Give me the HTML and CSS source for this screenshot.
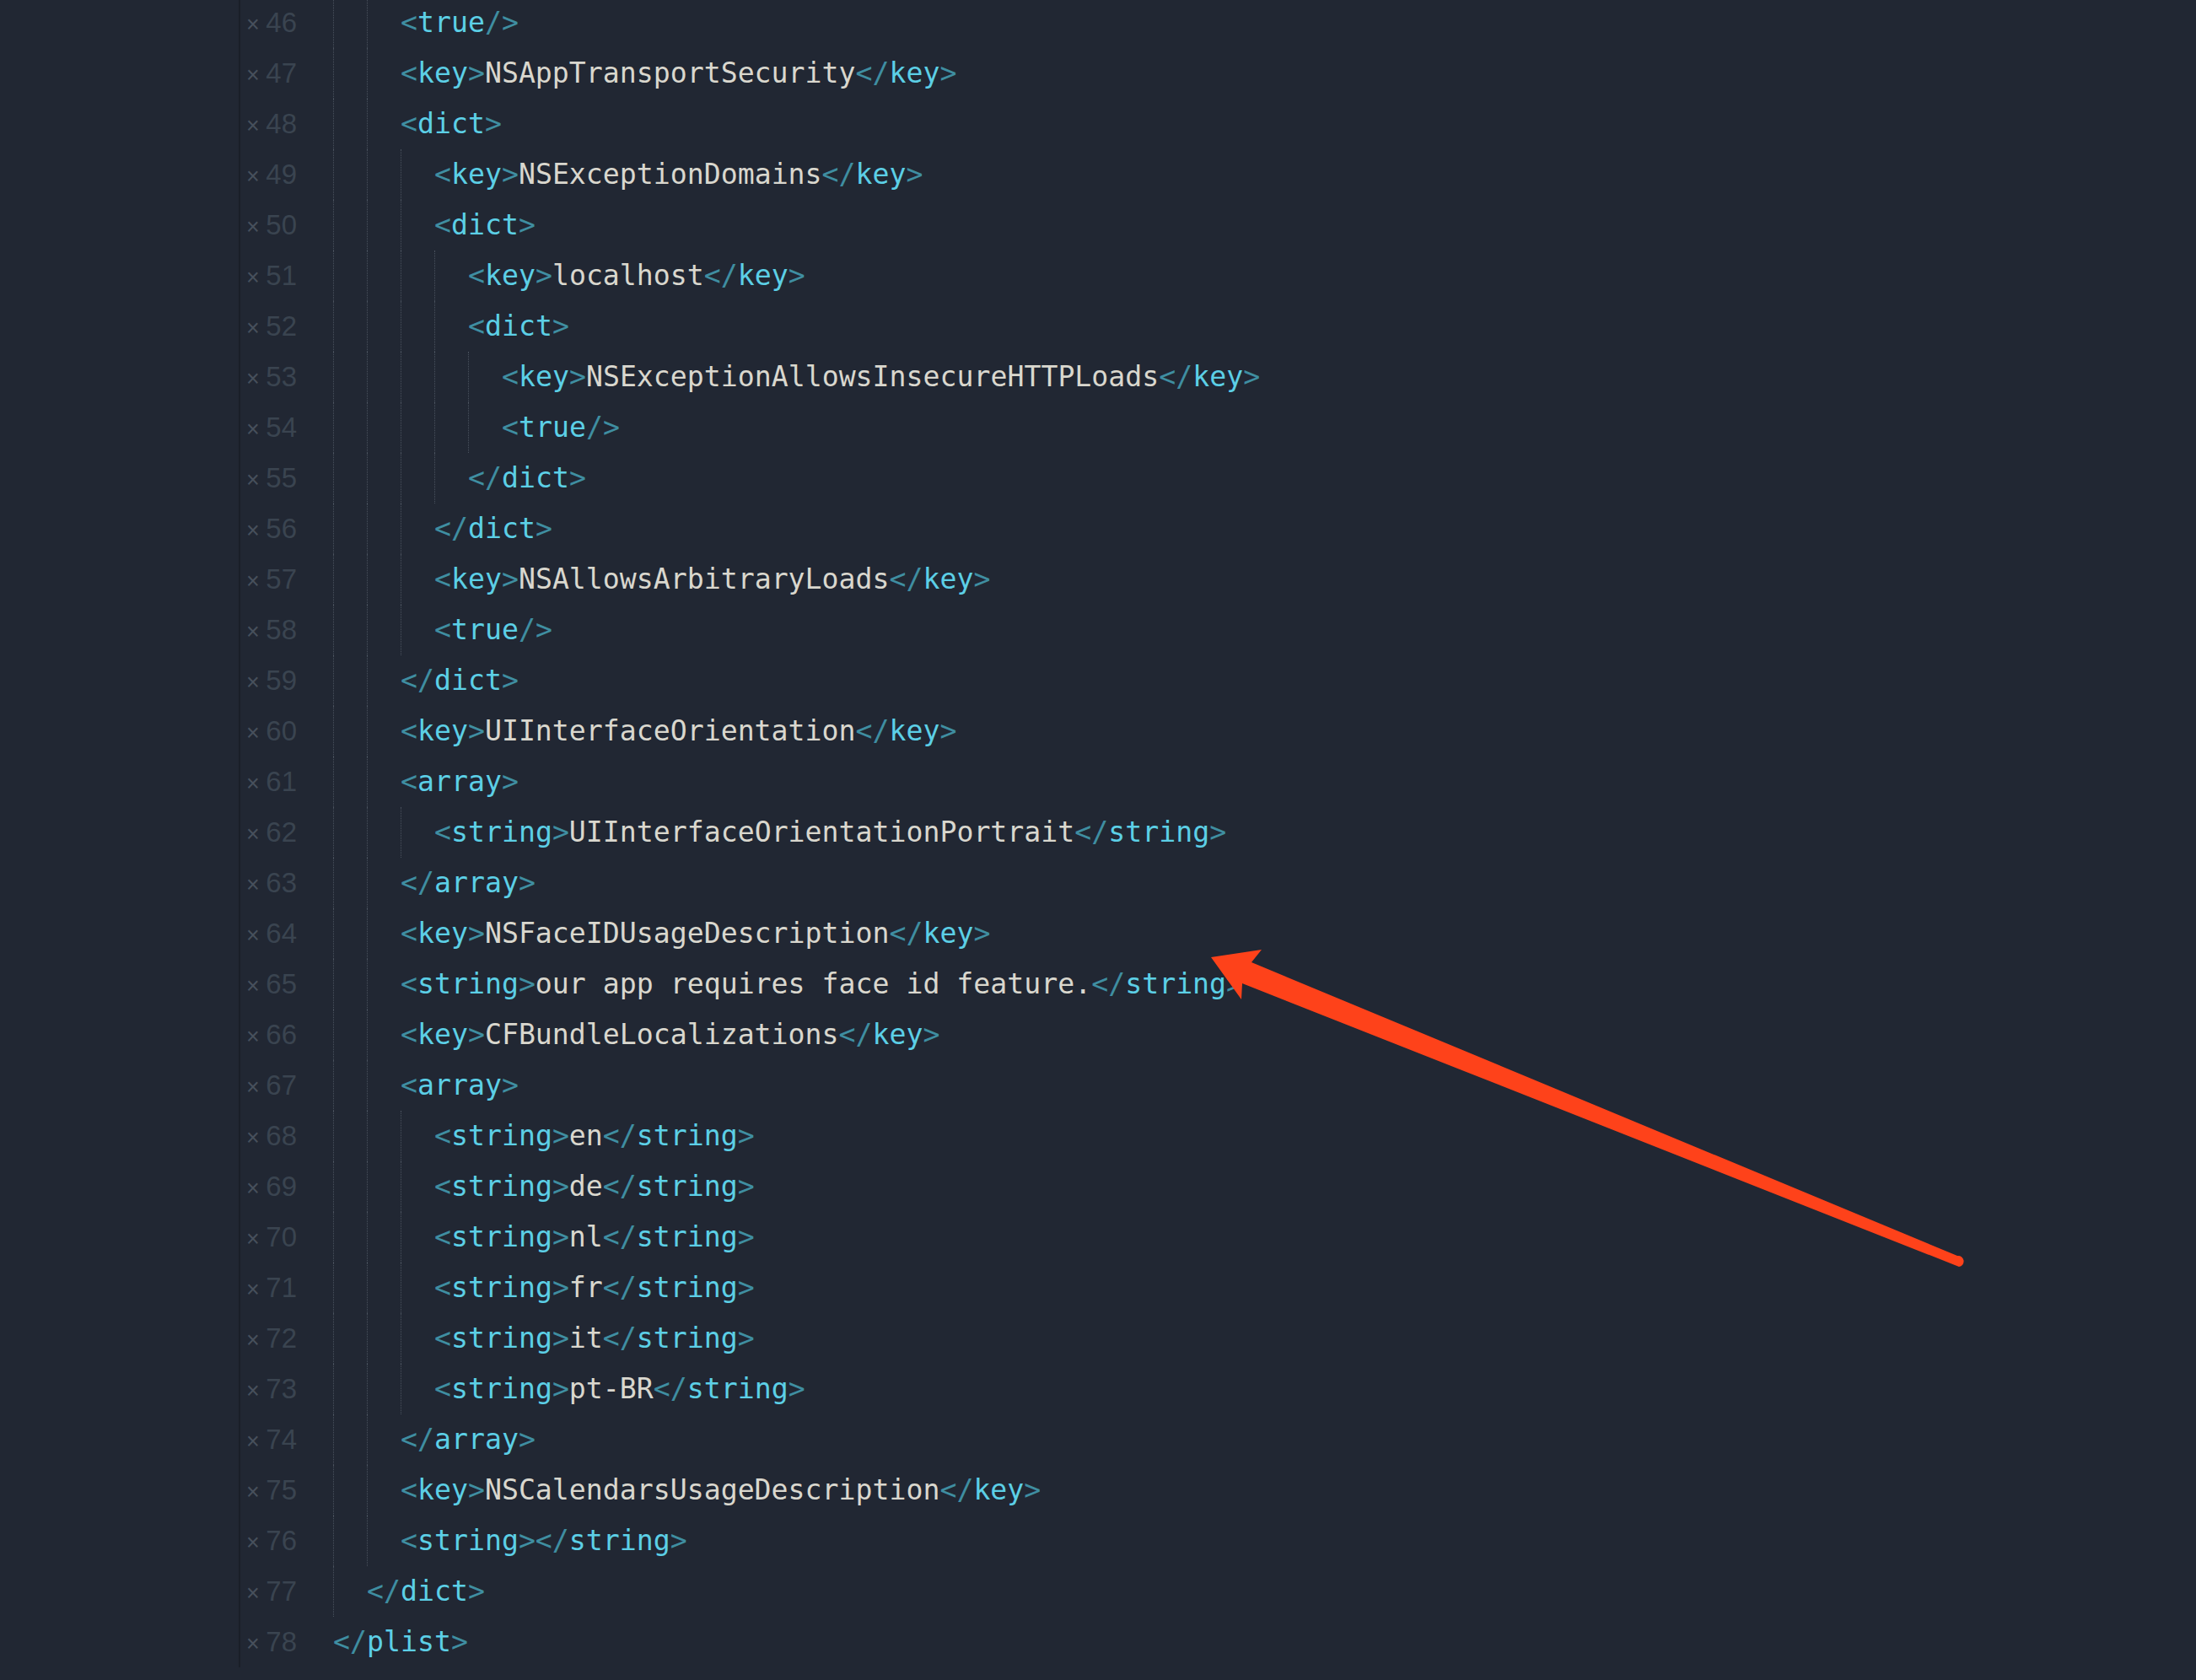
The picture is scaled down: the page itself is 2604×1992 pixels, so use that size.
FILE: index.html
```html
<!DOCTYPE html>
<html>
<head>
<meta charset="utf-8">
<link rel="stylesheet" href="styles.css">
</head>
<body>
<div class="editor">
  <div class="side"></div>
  <div class="lines">
    <div class="line"><span class="ln"><span class="x">×</span>46</span><span class="code"><span class="i"></span><span class="i"></span><span class="b">&lt;</span><span class="t">true</span><span class="b">/&gt;</span></span></div>
    <div class="line"><span class="ln"><span class="x">×</span>47</span><span class="code"><span class="i"></span><span class="i"></span><span class="b">&lt;</span><span class="t">key</span><span class="b">&gt;</span><span class="s">NSAppTransportSecurity</span><span class="b">&lt;/</span><span class="t">key</span><span class="b">&gt;</span></span></div>
    <div class="line"><span class="ln"><span class="x">×</span>48</span><span class="code"><span class="i"></span><span class="i"></span><span class="b">&lt;</span><span class="t">dict</span><span class="b">&gt;</span></span></div>
    <div class="line"><span class="ln"><span class="x">×</span>49</span><span class="code"><span class="i"></span><span class="i"></span><span class="i"></span><span class="b">&lt;</span><span class="t">key</span><span class="b">&gt;</span><span class="s">NSExceptionDomains</span><span class="b">&lt;/</span><span class="t">key</span><span class="b">&gt;</span></span></div>
    <div class="line"><span class="ln"><span class="x">×</span>50</span><span class="code"><span class="i"></span><span class="i"></span><span class="i"></span><span class="b">&lt;</span><span class="t">dict</span><span class="b">&gt;</span></span></div>
    <div class="line"><span class="ln"><span class="x">×</span>51</span><span class="code"><span class="i"></span><span class="i"></span><span class="i"></span><span class="i"></span><span class="b">&lt;</span><span class="t">key</span><span class="b">&gt;</span><span class="s">localhost</span><span class="b">&lt;/</span><span class="t">key</span><span class="b">&gt;</span></span></div>
    <div class="line"><span class="ln"><span class="x">×</span>52</span><span class="code"><span class="i"></span><span class="i"></span><span class="i"></span><span class="i"></span><span class="b">&lt;</span><span class="t">dict</span><span class="b">&gt;</span></span></div>
    <div class="line"><span class="ln"><span class="x">×</span>53</span><span class="code"><span class="i"></span><span class="i"></span><span class="i"></span><span class="i"></span><span class="i"></span><span class="b">&lt;</span><span class="t">key</span><span class="b">&gt;</span><span class="s">NSExceptionAllowsInsecureHTTPLoads</span><span class="b">&lt;/</span><span class="t">key</span><span class="b">&gt;</span></span></div>
    <div class="line"><span class="ln"><span class="x">×</span>54</span><span class="code"><span class="i"></span><span class="i"></span><span class="i"></span><span class="i"></span><span class="i"></span><span class="b">&lt;</span><span class="t">true</span><span class="b">/&gt;</span></span></div>
    <div class="line"><span class="ln"><span class="x">×</span>55</span><span class="code"><span class="i"></span><span class="i"></span><span class="i"></span><span class="i"></span><span class="b">&lt;/</span><span class="t">dict</span><span class="b">&gt;</span></span></div>
    <div class="line"><span class="ln"><span class="x">×</span>56</span><span class="code"><span class="i"></span><span class="i"></span><span class="i"></span><span class="b">&lt;/</span><span class="t">dict</span><span class="b">&gt;</span></span></div>
    <div class="line"><span class="ln"><span class="x">×</span>57</span><span class="code"><span class="i"></span><span class="i"></span><span class="i"></span><span class="b">&lt;</span><span class="t">key</span><span class="b">&gt;</span><span class="s">NSAllowsArbitraryLoads</span><span class="b">&lt;/</span><span class="t">key</span><span class="b">&gt;</span></span></div>
    <div class="line"><span class="ln"><span class="x">×</span>58</span><span class="code"><span class="i"></span><span class="i"></span><span class="i"></span><span class="b">&lt;</span><span class="t">true</span><span class="b">/&gt;</span></span></div>
    <div class="line"><span class="ln"><span class="x">×</span>59</span><span class="code"><span class="i"></span><span class="i"></span><span class="b">&lt;/</span><span class="t">dict</span><span class="b">&gt;</span></span></div>
    <div class="line"><span class="ln"><span class="x">×</span>60</span><span class="code"><span class="i"></span><span class="i"></span><span class="b">&lt;</span><span class="t">key</span><span class="b">&gt;</span><span class="s">UIInterfaceOrientation</span><span class="b">&lt;/</span><span class="t">key</span><span class="b">&gt;</span></span></div>
    <div class="line"><span class="ln"><span class="x">×</span>61</span><span class="code"><span class="i"></span><span class="i"></span><span class="b">&lt;</span><span class="t">array</span><span class="b">&gt;</span></span></div>
    <div class="line"><span class="ln"><span class="x">×</span>62</span><span class="code"><span class="i"></span><span class="i"></span><span class="i"></span><span class="b">&lt;</span><span class="t">string</span><span class="b">&gt;</span><span class="s">UIInterfaceOrientationPortrait</span><span class="b">&lt;/</span><span class="t">string</span><span class="b">&gt;</span></span></div>
    <div class="line"><span class="ln"><span class="x">×</span>63</span><span class="code"><span class="i"></span><span class="i"></span><span class="b">&lt;/</span><span class="t">array</span><span class="b">&gt;</span></span></div>
    <div class="line"><span class="ln"><span class="x">×</span>64</span><span class="code"><span class="i"></span><span class="i"></span><span class="b">&lt;</span><span class="t">key</span><span class="b">&gt;</span><span class="s">NSFaceIDUsageDescription</span><span class="b">&lt;/</span><span class="t">key</span><span class="b">&gt;</span></span></div>
    <div class="line"><span class="ln"><span class="x">×</span>65</span><span class="code"><span class="i"></span><span class="i"></span><span class="b">&lt;</span><span class="t">string</span><span class="b">&gt;</span><span class="s">our app requires face id feature.</span><span class="b">&lt;/</span><span class="t">string</span><span class="b">&gt;</span></span></div>
    <div class="line"><span class="ln"><span class="x">×</span>66</span><span class="code"><span class="i"></span><span class="i"></span><span class="b">&lt;</span><span class="t">key</span><span class="b">&gt;</span><span class="s">CFBundleLocalizations</span><span class="b">&lt;/</span><span class="t">key</span><span class="b">&gt;</span></span></div>
    <div class="line"><span class="ln"><span class="x">×</span>67</span><span class="code"><span class="i"></span><span class="i"></span><span class="b">&lt;</span><span class="t">array</span><span class="b">&gt;</span></span></div>
    <div class="line"><span class="ln"><span class="x">×</span>68</span><span class="code"><span class="i"></span><span class="i"></span><span class="i"></span><span class="b">&lt;</span><span class="t">string</span><span class="b">&gt;</span><span class="s">en</span><span class="b">&lt;/</span><span class="t">string</span><span class="b">&gt;</span></span></div>
    <div class="line"><span class="ln"><span class="x">×</span>69</span><span class="code"><span class="i"></span><span class="i"></span><span class="i"></span><span class="b">&lt;</span><span class="t">string</span><span class="b">&gt;</span><span class="s">de</span><span class="b">&lt;/</span><span class="t">string</span><span class="b">&gt;</span></span></div>
    <div class="line"><span class="ln"><span class="x">×</span>70</span><span class="code"><span class="i"></span><span class="i"></span><span class="i"></span><span class="b">&lt;</span><span class="t">string</span><span class="b">&gt;</span><span class="s">nl</span><span class="b">&lt;/</span><span class="t">string</span><span class="b">&gt;</span></span></div>
    <div class="line"><span class="ln"><span class="x">×</span>71</span><span class="code"><span class="i"></span><span class="i"></span><span class="i"></span><span class="b">&lt;</span><span class="t">string</span><span class="b">&gt;</span><span class="s">fr</span><span class="b">&lt;/</span><span class="t">string</span><span class="b">&gt;</span></span></div>
    <div class="line"><span class="ln"><span class="x">×</span>72</span><span class="code"><span class="i"></span><span class="i"></span><span class="i"></span><span class="b">&lt;</span><span class="t">string</span><span class="b">&gt;</span><span class="s">it</span><span class="b">&lt;/</span><span class="t">string</span><span class="b">&gt;</span></span></div>
    <div class="line"><span class="ln"><span class="x">×</span>73</span><span class="code"><span class="i"></span><span class="i"></span><span class="i"></span><span class="b">&lt;</span><span class="t">string</span><span class="b">&gt;</span><span class="s">pt-BR</span><span class="b">&lt;/</span><span class="t">string</span><span class="b">&gt;</span></span></div>
    <div class="line"><span class="ln"><span class="x">×</span>74</span><span class="code"><span class="i"></span><span class="i"></span><span class="b">&lt;/</span><span class="t">array</span><span class="b">&gt;</span></span></div>
    <div class="line"><span class="ln"><span class="x">×</span>75</span><span class="code"><span class="i"></span><span class="i"></span><span class="b">&lt;</span><span class="t">key</span><span class="b">&gt;</span><span class="s">NSCalendarsUsageDescription</span><span class="b">&lt;/</span><span class="t">key</span><span class="b">&gt;</span></span></div>
    <div class="line"><span class="ln"><span class="x">×</span>76</span><span class="code"><span class="i"></span><span class="i"></span><span class="b">&lt;</span><span class="t">string</span><span class="b">&gt;&lt;/</span><span class="t">string</span><span class="b">&gt;</span></span></div>
    <div class="line"><span class="ln"><span class="x">×</span>77</span><span class="code"><span class="i"></span><span class="b">&lt;/</span><span class="t">dict</span><span class="b">&gt;</span></span></div>
    <div class="line"><span class="ln"><span class="x">×</span>78</span><span class="code"><span class="b">&lt;/</span><span class="t">plist</span><span class="b">&gt;</span></span></div>
  </div>
</div>
<svg class="arrow" width="2604" height="1992" viewBox="0 0 2604 1992" xmlns="http://www.w3.org/2000/svg">
  <path d="M1436,1135 L1496,1126 L1484,1141 L2321,1489 A6.5,6.5 0 0 1 2323,1502 L1473,1166 L1472,1185 Z" fill="#fe421a"/>
</svg>
</body>
</html>
```

FILE: styles.css
```css
html, body {
  margin: 0;
  padding: 0;
  background: #212733;
  width: 2604px;
  height: 1992px;
  overflow: hidden;
}

.editor {
  display: flex;
  margin-top: -3px;
}

.side {
  width: 283px;
  flex: none;
}

.lines {
  border-left: 2px solid #1a1f28;
  flex: 1;
}

.line {
  display: flex;
  height: 60px;
  line-height: 60px;
}

.ln {
  flex: none;
  width: 110px;
  box-sizing: border-box;
  padding-left: 7px;
  padding-right: 43px;
  display: flex;
  justify-content: space-between;
  align-items: baseline;
  font-family: "Liberation Sans", Arial, sans-serif;
  font-size: 33px;
  color: #3a4450;
}

.x {
  font-size: 27px;
  color: #47505c;
}

.code {
  white-space: pre;
  font-family: "DejaVu Sans Mono", "Liberation Mono", monospace;
  font-size: 33.2px;
  color: #d9d7ce;
}

.i {
  display: inline-block;
  width: 40px;
  height: 60px;
  vertical-align: top;
  box-sizing: border-box;
  border-left: 1px dotted #49515d;
}

.b { color: #3f8ea1; }
.t { color: #5ccfe6; }
.s { color: #d9d7ce; }

.arrow {
  position: absolute;
  left: 0;
  top: 0;
}
```
